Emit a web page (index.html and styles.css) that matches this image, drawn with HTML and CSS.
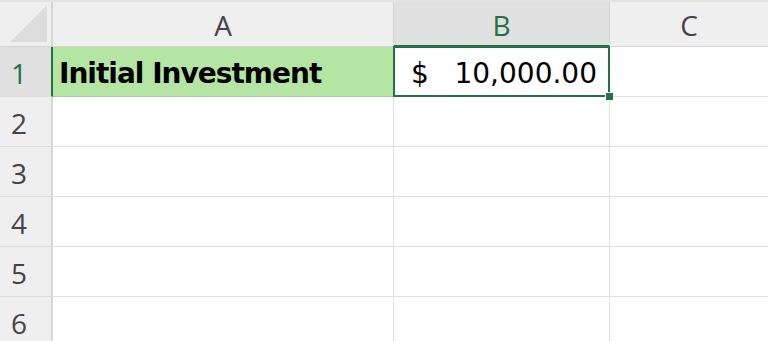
FILE: index.html
```html
<!DOCTYPE html>
<html lang="en">
<head>
  <meta charset="UTF-8">
  <meta name="viewport" content="width=device-width, initial-scale=1.0">
  <title>Initial Investment</title>
  <link rel="stylesheet" href="styles.css">
</head>
<body>
  <div class="sheet">
    <!-- header row -->
    <div class="corner">
      <svg width="40" height="40" viewBox="0 0 40 40"><polygon points="1,38 38,1 38,38" fill="#dcdcdc"/></svg>
    </div>
    <div class="col-head">A</div>
    <div class="col-head active">B</div>
    <div class="col-head last">C</div>

    <!-- row 1 -->
    <div class="row-head active">1</div>
    <div class="cell label">Initial Investment</div>
    <div class="cell money selected"><span>$</span><span>10,000.00</span></div>
    <div class="cell last"></div>

    <div class="row-head">2</div>
    <div class="cell"></div>
    <div class="cell"></div>
    <div class="cell last"></div>

    <div class="row-head">3</div>
    <div class="cell"></div>
    <div class="cell"></div>
    <div class="cell last"></div>

    <div class="row-head">4</div>
    <div class="cell"></div>
    <div class="cell"></div>
    <div class="cell last"></div>

    <div class="row-head">5</div>
    <div class="cell"></div>
    <div class="cell"></div>
    <div class="cell last"></div>

    <div class="row-head">6</div>
    <div class="cell"></div>
    <div class="cell"></div>
    <div class="cell last"></div>
  </div>
</body>
</html>
```

FILE: styles.css
```css
body {
  margin: 0;
  padding: 0;
  background-color: #fff;
  font-family: "Open Sans", "Noto Sans", sans-serif;
  overflow: hidden;
}
.sheet {
  display: grid;
  grid-template-columns: 53px 341px 216px 1fr;
  grid-template-rows: 45px repeat(6, 50px);
  border-top: 2px solid #e4e3df;
}
.corner {
  background-color: #efefef;
  border-right: 2px solid #d6d6d6;
  border-bottom: 1px solid #d4d4d4;
  display: flex;
  align-items: flex-end;
  justify-content: flex-end;
  padding: 0 2px 2px 0;
  box-sizing: border-box;
}
.corner svg {
  display: block;
}
.col-head {
  background-color: #efefef;
  border-right: 1px solid #d4d4d4;
  border-bottom: 1px solid #d4d4d4;
  color: #444;
  font-size: 28px;
  display: flex;
  align-items: center;
  justify-content: center;
  padding-top: 2px;
  box-sizing: border-box;
}
.col-head.active {
  background-color: #e0e0e0;
  color: #217346;
  border-bottom: 2px solid #217346;
}
.col-head.last {
  border-right: none;
}
.row-head {
  background-color: #efefef;
  border-right: 2px solid #d6d6d6;
  border-bottom: 1px solid #dcdcdc;
  color: #444;
  font-size: 28px;
  display: flex;
  align-items: center;
  padding-left: 11px;
  padding-top: 2px;
  box-sizing: border-box;
}
.row-head.active {
  background-color: #e0e0e0;
  color: #217346;
  border-right-color: #217346;
}
.cell {
  border-right: 1px solid #e1e1e1;
  border-bottom: 1px solid #e1e1e1;
  box-sizing: border-box;
  display: flex;
  align-items: center;
  font-family: "DejaVu Sans", sans-serif;
  font-size: 28px;
  color: #000;
}
.cell.last {
  border-right: none;
}
.label {
  background-color: #b4e5a2;
  border-bottom-color: #a9c99c;
  font-weight: 700;
  padding: 3px 0 0 6px;
  letter-spacing: -1px;
}
.money {
  justify-content: space-between;
  padding: 3px 12px 0 17px;
  position: relative;
}
.selected::after {
  content: "";
  position: absolute;
  left: -1px;
  top: -1px;
  right: -1px;
  bottom: -1px;
  border: 2px solid #217346;
}
.selected::before {
  content: "";
  position: absolute;
  right: -5px;
  bottom: -5px;
  width: 7px;
  height: 7px;
  background-color: #217346;
  border: 1px solid #fff;
  z-index: 1;
}
```
